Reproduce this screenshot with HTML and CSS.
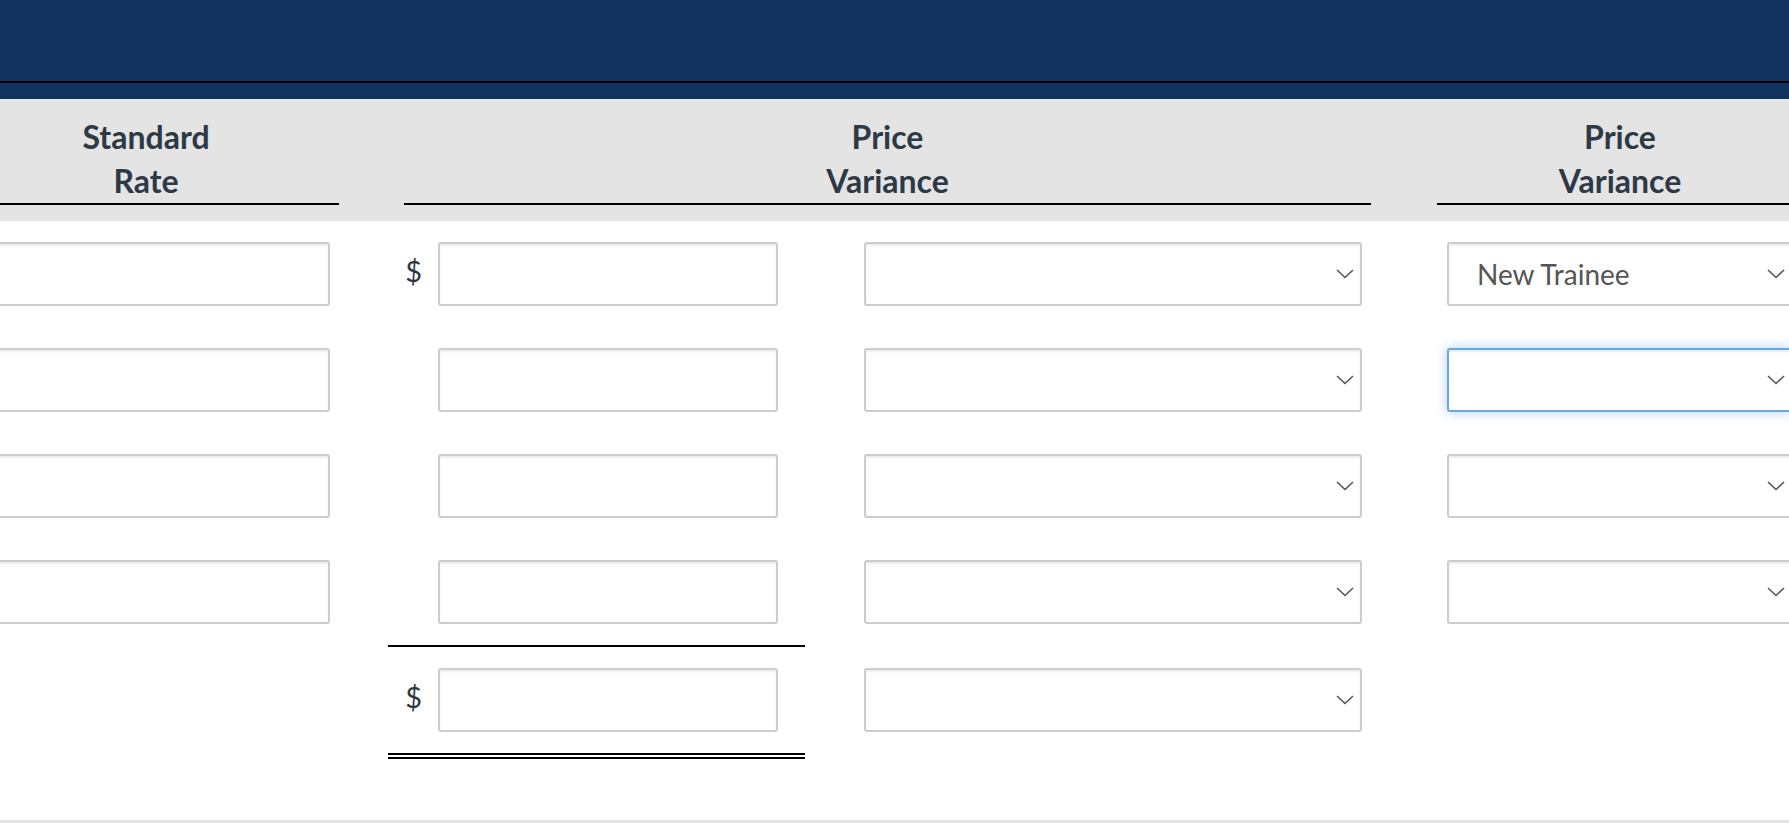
FILE: index.html
```html
<!DOCTYPE html>
<html lang="en">
<head>
<meta charset="utf-8">
<title>Price Variance</title>
<link rel="stylesheet" href="styles.css">
</head>
<body>
<header class="topbar"><div class="topbar-rule"></div></header>
<main class="sheet">
  <div class="head-band">
    <div class="head-row">
      <div class="th th-a">Standard<br>Rate</div>
      <div class="th th-b">Price<br>Variance</div>
      <div class="th th-c">Price<br>Variance</div>
    </div>
  </div>
  <div class="grid">
    <!-- row 1 -->
    <div class="cell"><input class="field f-a" type="text"></div>
    <div class="cell"></div>
    <div class="cell cur">$</div>
    <div class="cell c-in"><input class="field f-b" type="text"></div>
    <div class="cell"><div class="sel s-b"><select class="field"><option></option></select><svg class="chev" width="18" height="10" viewBox="0 0 18 10"><path d="M1 1 L9 8.5 L17 1" fill="none" stroke="#555" stroke-width="1.6"/></svg></div></div>
    <div class="cell"></div>
    <div class="cell"><div class="sel s-c"><select class="field"><option>New Trainee</option></select><svg class="chev" width="18" height="10" viewBox="0 0 18 10"><path d="M1 1 L9 8.5 L17 1" fill="none" stroke="#555" stroke-width="1.6"/></svg></div></div>
    <!-- row 2 -->
    <div class="cell"><input class="field f-a" type="text"></div>
    <div class="cell"></div>
    <div class="cell cur"></div>
    <div class="cell c-in"><input class="field f-b" type="text"></div>
    <div class="cell"><div class="sel s-b"><select class="field"><option></option></select><svg class="chev" width="18" height="10" viewBox="0 0 18 10"><path d="M1 1 L9 8.5 L17 1" fill="none" stroke="#555" stroke-width="1.6"/></svg></div></div>
    <div class="cell"></div>
    <div class="cell"><div class="sel s-c"><select class="field focused"><option></option></select><svg class="chev" width="18" height="10" viewBox="0 0 18 10"><path d="M1 1 L9 8.5 L17 1" fill="none" stroke="#555" stroke-width="1.6"/></svg></div></div>
    <!-- row 3 -->
    <div class="cell"><input class="field f-a" type="text"></div>
    <div class="cell"></div>
    <div class="cell cur"></div>
    <div class="cell c-in"><input class="field f-b" type="text"></div>
    <div class="cell"><div class="sel s-b"><select class="field"><option></option></select><svg class="chev" width="18" height="10" viewBox="0 0 18 10"><path d="M1 1 L9 8.5 L17 1" fill="none" stroke="#555" stroke-width="1.6"/></svg></div></div>
    <div class="cell"></div>
    <div class="cell"><div class="sel s-c"><select class="field"><option></option></select><svg class="chev" width="18" height="10" viewBox="0 0 18 10"><path d="M1 1 L9 8.5 L17 1" fill="none" stroke="#555" stroke-width="1.6"/></svg></div></div>
    <!-- row 4 -->
    <div class="cell"><input class="field f-a" type="text"></div>
    <div class="cell"></div>
    <div class="cell cur sum-line"></div>
    <div class="cell c-in sum-line"><input class="field f-b" type="text"></div>
    <div class="cell"><div class="sel s-b"><select class="field"><option></option></select><svg class="chev" width="18" height="10" viewBox="0 0 18 10"><path d="M1 1 L9 8.5 L17 1" fill="none" stroke="#555" stroke-width="1.6"/></svg></div></div>
    <div class="cell"></div>
    <div class="cell"><div class="sel s-c"><select class="field"><option></option></select><svg class="chev" width="18" height="10" viewBox="0 0 18 10"><path d="M1 1 L9 8.5 L17 1" fill="none" stroke="#555" stroke-width="1.6"/></svg></div></div>
    <!-- total row -->
    <div class="cell"></div>
    <div class="cell"></div>
    <div class="cell cur total-line">$</div>
    <div class="cell c-in total-line"><input class="field f-b" type="text"></div>
    <div class="cell"><div class="sel s-b"><select class="field"><option></option></select><svg class="chev" width="18" height="10" viewBox="0 0 18 10"><path d="M1 1 L9 8.5 L17 1" fill="none" stroke="#555" stroke-width="1.6"/></svg></div></div>
    <div class="cell"></div>
    <div class="cell"></div>
  </div>
</main>
</body>
</html>
```

FILE: styles.css
```css
html, body {
  margin: 0;
  padding: 0;
  overflow: hidden;
  background: #ffffff;
}

body {
  font-family: Lato, "Open Sans", "Liberation Sans", sans-serif;
  color: #2d3a45;
}

.topbar {
  height: 99px;
  background: #12335f;
  overflow: hidden;
}

.topbar-rule {
  margin-top: 81px;
  height: 2px;
  background: #000000;
}

.sheet {
  padding-bottom: 61px;
  border-bottom: 3px solid #e3e3e3;
}

.head-band {
  background: #e4e4e4;
  padding: 16px 0;
}

.head-row {
  display: flex;
  margin-left: -47px;
}

.th {
  flex: none;
  font-size: 32px;
  font-weight: 700;
  line-height: 44px;
  text-align: center;
  color: #2d3a45;
  border-bottom: 2px solid #000000;
}

.th-a { width: 386px; }
.th-b { width: 967px; margin-left: 65px; }
.th-c { width: 366px; margin-left: 66px; }

.grid {
  display: grid;
  grid-template-columns: 386px 49px 50px 367px 566px 66px 386px;
  margin-left: -47px;
}

.cell {
  padding: 21px 0;
  display: flex;
  align-items: flex-start;
  min-height: 64px;
}

.cur {
  justify-content: flex-end;
  padding-right: 16px;
  font-size: 29px;
  line-height: 58px;
  color: #2d3a45;
}

.c-in {
  padding-right: 27px;
}

.sum-line {
  border-bottom: 2px solid #000000;
}

.total-line {
  border-bottom: 6px double #000000;
}

.field {
  box-sizing: border-box;
  height: 64px;
  border: 2px solid #cccccc;
  border-radius: 3px;
  background: #ffffff;
  box-shadow: inset 0 2px 2px rgba(0, 0, 0, 0.075);
  font-family: Lato, "Open Sans", "Liberation Sans", sans-serif;
  font-size: 28px;
  color: #555555;
  outline: none;
  margin: 0;
}

.f-a {
  width: 367px;
  margin-left: 10px;
}

.f-b {
  width: 340px;
}

.sel {
  position: relative;
  display: flex;
}

.sel select {
  appearance: none;
  -webkit-appearance: none;
  width: 100%;
  padding: 0 40px 0 28px;
}

.s-b {
  width: 498px;
  margin-left: 59px;
}

.s-c {
  width: 346px;
  margin-left: 10px;
}

.chev {
  position: absolute;
  right: 8px;
  top: 27px;
  pointer-events: none;
}

.focused {
  border-color: #6aa6df;
  box-shadow: inset 0 2px 2px rgba(0, 0, 0, 0.075), 0 0 12px rgba(102, 175, 233, 0.55);
}
```
